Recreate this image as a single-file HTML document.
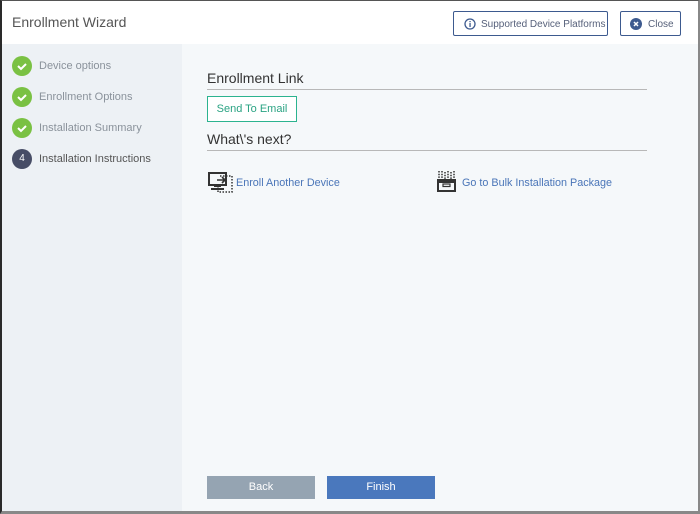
<!DOCTYPE html>
<html><head><meta charset="utf-8"><style>
*{box-sizing:border-box;margin:0;padding:0}
body{width:700px;height:514px;background:#fff;font-family:"Liberation Sans",Arial,sans-serif;position:relative;overflow:hidden}
.frame{position:absolute;left:0;top:0;width:700px;height:514px;border-left:2px solid #2a2a2a;border-top:1px solid #555;border-right:2px solid #888;border-bottom:3px solid #888}
.hdr{position:absolute;left:2px;top:1px;width:696px;height:43px;background:#fff}
.title{position:absolute;left:10px;top:13px;font-size:14px;color:#555}
.btn{position:absolute;top:10px;height:25px;border:1px solid #3d5a8f;border-radius:2px;background:#fff;color:#56607a;font-size:10px;line-height:25px;padding-left:27px;white-space:nowrap}
.side{position:absolute;left:2px;top:44px;width:180px;height:467px;background:#edf1f5}
.main{position:absolute;left:182px;top:44px;width:516px;height:467px;background:#f5f8fa}
.step{position:absolute;left:10px;height:20px;font-size:11px;color:#8a929b;line-height:20px;padding-left:27px;white-space:nowrap}
.step i{position:absolute;left:0;top:0;width:20px;height:20px;border-radius:50%;background:#7ac143}
.step i.n{background:#474d66;color:#fff;font-style:normal;font-size:10px;text-align:center;line-height:20px}
.h{position:absolute;left:207px;width:440px;font-size:14px;color:#333;border-bottom:1px solid #b8b8b8;padding-bottom:3px}
.link{position:absolute;font-size:10.8px;color:#4a75b8;white-space:nowrap}
.fb{position:absolute;top:476px;height:23px;width:108px;color:#fff;font-size:11px;text-align:center;line-height:23px}
</style></head><body>
<div class="hdr"><div class="title">Enrollment Wizard</div>
<div class="btn" style="left:451px;width:155px"><svg style="position:absolute;left:10px;top:6px" width="12" height="12" viewBox="0 0 12 12"><circle cx="6" cy="6" r="5" fill="none" stroke="#3d5a8f" stroke-width="1.3"/><rect x="5.4" y="5" width="1.3" height="4" fill="#3d5a8f"/><rect x="5.4" y="3" width="1.3" height="1.2" fill="#3d5a8f"/></svg>Supported Device Platforms</div>
<div class="btn" style="left:618px;width:61px"><svg style="position:absolute;left:9px;top:6px" width="12" height="12" viewBox="0 0 12 12"><circle cx="6" cy="6" r="6" fill="#3d5a8f"/><path d="M4 4L8 8M8 4L4 8" stroke="#fff" stroke-width="1.5"/></svg>Close</div>
</div>
<div class="side">
<div class="step" style="top:12px"><i><svg width="20" height="20"><path d="M6 10l3 3 5-5" stroke="#fff" stroke-width="2" fill="none"/></svg></i>Device options</div>
<div class="step" style="top:43px"><i><svg width="20" height="20"><path d="M6 10l3 3 5-5" stroke="#fff" stroke-width="2" fill="none"/></svg></i>Enrollment Options</div>
<div class="step" style="top:74px"><i><svg width="20" height="20"><path d="M6 10l3 3 5-5" stroke="#fff" stroke-width="2" fill="none"/></svg></i>Installation Summary</div>
<div class="step" style="top:105px;color:#555"><i class="n">4</i>Installation Instructions</div>
</div>
<div class="main"></div>
<div class="h" style="top:70px">Enrollment Link</div>
<div style="position:absolute;left:207px;top:96px;width:90px;height:26px;border:1px solid #2bb38f;background:#fff;color:#2aa383;font-size:11px;text-align:center;line-height:24px">Send To Email</div>
<div class="h" style="top:131px">What\'s next?</div>
<svg style="position:absolute;left:208px;top:172px" width="26" height="22" viewBox="0 0 26 22"><rect x="1" y="1" width="17" height="12" fill="none" stroke="#333" stroke-width="2"/><rect x="6" y="13" width="7" height="2" fill="#333"/><rect x="3" y="16" width="13" height="2" fill="#333"/><path d="M9 8h8M14 5l3 3-3 3" stroke="#333" stroke-width="1.6" fill="none"/><path d="M12 4h12v16H10v-5" stroke="#333" stroke-width="1.5" stroke-dasharray="1.5 1.5" fill="none"/></svg>
<div class="link" style="left:236px;top:177px">Enroll Another Device</div>
<svg style="position:absolute;left:436px;top:170px" width="22" height="22" viewBox="0 0 22 22"><path d="M3 1v8M6 1v8M9 2v7M12 1v8M15 2v7M18 1v8" stroke="#333" stroke-width="1.5" stroke-dasharray="1.5 1.2"/><rect x="1" y="9" width="19" height="3" fill="#333"/><rect x="2" y="12" width="17" height="9" fill="none" stroke="#333" stroke-width="2"/><rect x="7" y="14" width="7" height="2.5" fill="none" stroke="#333" stroke-width="1.2"/></svg>
<div class="link" style="left:462px;top:177px">Go to Bulk Installation Package</div>
<div class="fb" style="left:207px;background:#95a4b2">Back</div>
<div class="fb" style="left:327px;background:#4a78bd">Finish</div>
<div class="frame"></div>
</body></html>
